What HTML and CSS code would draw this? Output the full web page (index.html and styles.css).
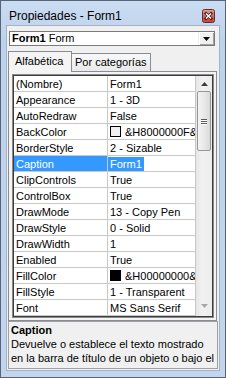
FILE: index.html
```html
<!DOCTYPE html>
<html lang="es">
<head>
    <meta charset="UTF-8">
    <title>Propiedades - Form1</title>
    <link rel="stylesheet" href="styles.css">
</head>
<body>

<div class="window">
    <div class="titlebar">
        <span class="title">Propiedades - Form1</span>
        <span class="close">
            <svg width="13" height="14" viewBox="0 0 13 14">
                <defs>
                    <linearGradient id="cg" x1="0" y1="0" x2="0" y2="1">
                        <stop offset="0" stop-color="#e6a49c"/>
                        <stop offset="0.5" stop-color="#d06a60"/>
                        <stop offset="1" stop-color="#c0453b"/>
                    </linearGradient>
                </defs>
                <rect x="0.5" y="0.5" width="12" height="13" rx="2" fill="url(#cg)" stroke="#6a2a25"/>
                <path d="M4 4.5 L9 9.5 M9 4.5 L4 9.5" stroke="#4a1f1b" stroke-width="3" stroke-linecap="square"/>
                <path d="M4 4.5 L9 9.5 M9 4.5 L4 9.5" stroke="#fff" stroke-width="1.4"/>
            </svg>
        </span>
    </div>

    <div class="client">
        <!-- objeto seleccionado -->
        <div class="combo">
            <span class="combo-text"><b>Form1</b> Form</span>
            <span class="combo-btn">
                <svg width="7" height="4" viewBox="0 0 7 4"><path d="M0 0 H7 L3.5 4 Z" fill="#000"/></svg>
            </span>
        </div>

        <div class="tabs">
            <div class="tab active">Alfabética</div>
            <div class="tab">Por categorías</div>
        </div>

        <div class="panel">
            <div class="grid">
                <div class="grid-in">
                    <div class="rows">
                        <div class="row"><div class="name">(Nombre)</div><div class="val">Form1</div></div>
                        <div class="row"><div class="name">Appearance</div><div class="val">1 - 3D</div></div>
                        <div class="row"><div class="name">AutoRedraw</div><div class="val">False</div></div>
                        <div class="row"><div class="name">BackColor</div><div class="val"><span class="swatch light"></span>&amp;H8000000F&amp;</div></div>
                        <div class="row"><div class="name">BorderStyle</div><div class="val">2 - Sizable</div></div>
                        <div class="row sel"><div class="name">Caption</div><div class="val"><span class="hl">Form1</span></div></div>
                        <div class="row"><div class="name">ClipControls</div><div class="val">True</div></div>
                        <div class="row"><div class="name">ControlBox</div><div class="val">True</div></div>
                        <div class="row"><div class="name">DrawMode</div><div class="val">13 - Copy Pen</div></div>
                        <div class="row"><div class="name">DrawStyle</div><div class="val">0 - Solid</div></div>
                        <div class="row"><div class="name">DrawWidth</div><div class="val">1</div></div>
                        <div class="row"><div class="name">Enabled</div><div class="val">True</div></div>
                        <div class="row"><div class="name">FillColor</div><div class="val"><span class="swatch dark"></span>&amp;H00000000&amp;</div></div>
                        <div class="row"><div class="name">FillStyle</div><div class="val">1 - Transparent</div></div>
                        <div class="row"><div class="name">Font</div><div class="val">MS Sans Serif</div></div>
                    </div>

                    <div class="vscroll">
                        <div class="sb-btn up">
                            <svg width="7" height="4" viewBox="0 0 7 4"><path d="M3.5 0 L7 4 H0 Z" fill="#3c3c3c"/></svg>
                        </div>
                        <div class="thumb">
                            <span class="grip"></span>
                            <span class="grip"></span>
                            <span class="grip"></span>
                        </div>
                        <div class="sb-track"></div>
                        <div class="sb-btn down">
                            <svg width="7" height="4" viewBox="0 0 7 4"><path d="M0 0 H7 L3.5 4 Z" fill="#a8a8a8"/></svg>
                        </div>
                    </div>
                </div>
            </div>
        </div>

        <!-- descripcion de la propiedad -->
        <div class="desc">
            <div class="desc-title">Caption</div>
            <div class="desc-text">Devuelve o establece el texto mostrado en la barra de título de un objeto o bajo el</div>
        </div>
    </div>
</div>

</body>
</html>
```

FILE: styles.css
```css
* {
    box-sizing: border-box;
}

body {
    margin: 0;
    font-family: "Liberation Sans", Arial, sans-serif;
    font-size: 11px;
    color: #000;
    background: #fff;
}

.window {
    width: 226px;
    height: 378px;
    border: 1px solid #56657b;
    background: linear-gradient(#cadcf2, #bed2eb 40px, #c2d5ed);
    display: flex;
    flex-direction: column;
}

.titlebar {
    height: 25px;
    display: flex;
    align-items: flex-start;
    padding: 7px 0 0 8px;
}

.title {
    font-size: 12px;
    line-height: 14px;
    margin-top: 1px;
}

.close {
    margin-left: auto;
    margin-right: 10px;
    width: 13px;
    height: 14px;
    margin-top: 1px;
}

.close svg {
    display: block;
}

.client {
    height: 344px;
    margin: 0 6px 7px 6px;
    background: #f0f0f0;
    box-shadow: 0 0 0 1px #a2b4cb;
    display: flex;
    flex-direction: column;
}

.combo {
    margin: 5px 4px 0 2px;
    height: 15px;
    border: 1px solid #7a7a7a;
    background: #fff;
    display: flex;
    align-items: stretch;
}

.combo-text {
    padding: 0 0 0 2px;
    line-height: 13px;
}

.combo-btn {
    margin-left: auto;
    width: 16px;
    background: #f0f0f0;
    border-left: 1px solid #f0f0f0;
    box-shadow: inset 1px 1px #fff, inset -1px -1px #a0a0a0;
    display: flex;
    align-items: center;
    justify-content: center;
}

.combo-btn svg {
    display: block;
    margin-top: 1px;
}

.tabs {
    margin: 5px 0 0 1px;
    height: 20px;
    display: flex;
    align-items: flex-end;
}

.tab {
    height: 18px;
    width: 79px;
    border: 1px solid #898c95;
    border-bottom: none;
    border-left: none;
    padding: 2px 0 0 3px;
    line-height: 13px;
    background: linear-gradient(#f9f9f9, #e9e9e9);
    white-space: nowrap;
}

.tab.active {
    height: 21px;
    width: 64px;
    border-left: 1px solid #898c95;
    margin-bottom: -1px;
    padding: 3px 0 0 6px;
    background: #f4f4f4;
    position: relative;
    z-index: 1;
}

.panel {
    height: 250px;
    margin: 0 2px 0 1px;
    border: 1px solid #898c95;
    padding: 2px 2px 2px 3px;
    background: #f4f4f4;
}

.grid {
    width: 202px;
    height: 244px;
    border: 1px solid #8a8a8a;
}

.grid-in {
    height: 100%;
    border: 1px solid #3c3c3c;
    display: flex;
    background: #fff;
}

.rows {
    width: 182px;
}

.row {
    display: flex;
    height: 16px;
    border-bottom: 1px solid #c8c8c8;
}

.name {
    width: 94px;
    border-right: 1px solid #c8c8c8;
    padding: 1px 0 0 2px;
    line-height: 14px;
    white-space: nowrap;
    overflow: hidden;
}

.val {
    width: 88px;
    border-right: 1px solid #c8c8c8;
    padding: 1px 0 0 2px;
    line-height: 14px;
    white-space: nowrap;
    overflow: hidden;
    display: flex;
    align-items: flex-start;
}

.row.sel .name {
    background: #3399ff;
    color: #fff;
}

.hl {
    margin-left: -2px;
    padding: 0 2px;
    background: #3399ff;
    color: #fff;
}

.swatch {
    flex: none;
    width: 11px;
    height: 11px;
    margin: 1px 4px 0 0;
    border: 1px solid #000;
}

.swatch.light {
    background: #f0f0f0;
}

.swatch.dark {
    background: #000;
}

.vscroll {
    width: 16px;
    background: linear-gradient(90deg, #e6e6e6, #f2f2f2 40%, #ececec);
    display: flex;
    flex-direction: column;
}

.sb-btn {
    height: 15px;
    display: flex;
    justify-content: center;
    padding-top: 6px;
}

.sb-btn svg {
    display: block;
}

.sb-btn.down {
    height: 15px;
    padding-top: 3px;
}

.thumb {
    height: 60px;
    width: 14px;
    margin: 0 0 0 1px;
    border: 1px solid #979797;
    border-radius: 2px;
    background: linear-gradient(90deg, #f4f4f4, #e9e9e9 50%, #d9d9d9);
    display: flex;
    flex-direction: column;
    align-items: center;
    justify-content: center;
    gap: 1px;
}

.grip {
    width: 6px;
    height: 1px;
    background: #5a5a5a;
    box-shadow: 0 1px #fff;
}

.sb-track {
    flex: 1;
}

.desc {
    height: 48px;
    margin: 0 1px 0 1px;
    border: 1px solid #a0a0a0;
    padding: 1px 0 0 2px;
    line-height: 14px;
    background: #f0f0f0;
}

.desc-title {
    font-weight: bold;
}
```
